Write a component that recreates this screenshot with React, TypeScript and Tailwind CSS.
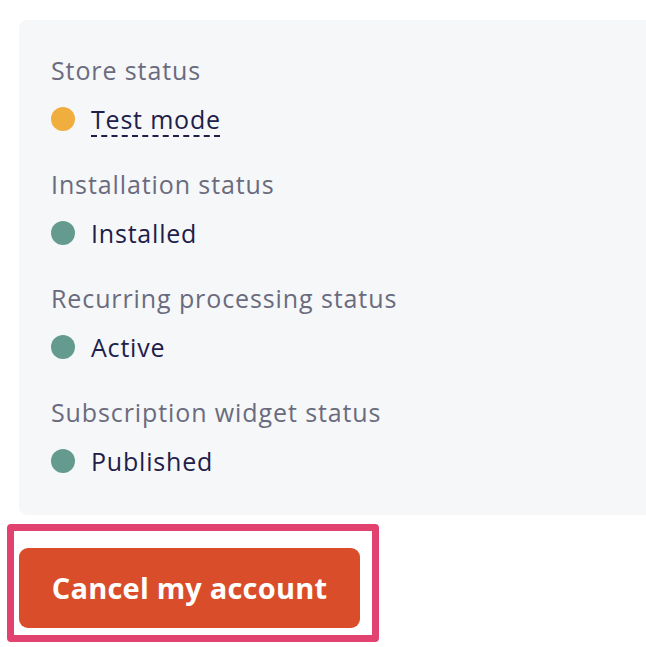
const statuses = [
  { label: "Store status", value: "Test mode", dot: "bg-[#f0ae3e]", dashed: true },
  { label: "Installation status", value: "Installed", dot: "bg-[#659b8f]" },
  { label: "Recurring processing status", value: "Active", dot: "bg-[#659b8f]" },
  { label: "Subscription widget status", value: "Published", dot: "bg-[#659b8f]" },
];

export default function App() {
  return (
    <div className="min-h-screen w-[646px] overflow-hidden bg-white pt-[20px] font-['Open_Sans',sans-serif]">
      {/* Status panel */}
      <div className="ml-[19px] w-[640px] rounded-[8px] bg-[#f6f7f9] pl-[32px] pt-[34px] pb-[38px]">
        <div className="flex flex-col gap-[33px]">
          {statuses.map((s) => (
            <div key={s.label}>
              <div className="h-[32px] text-[25px] leading-[32px] tracking-[0.9px] text-[#6a6b7d]">
                {s.label}
              </div>
              <div className="mt-[17px] flex h-[32px] items-center gap-[16px]">
                <span className={`h-[24px] w-[24px] rounded-full ${s.dot}`} />
                <span
                  className={`text-[25px] leading-[32px] tracking-[0.8px] text-[#1e2049] ${
                    s.dashed
                      ? "underline decoration-dashed decoration-[1.5px] underline-offset-[6px]"
                      : ""
                  }`}
                >
                  {s.value}
                </span>
              </div>
            </div>
          ))}
        </div>
      </div>

      {/* Highlighted action */}
      <div className="ml-[7px] mt-[9px] w-[372px] rounded-[4px] border-[7px] border-[#e2426f] pt-[17px] pb-[7px] pl-[5px] pr-[12px]">
        <button className="flex h-[80px] w-[341px] items-center justify-center rounded-[9px] bg-[#d94d2b] text-[29px] font-bold tracking-[0.2px] text-white">
          Cancel my account
        </button>
      </div>
    </div>
  );
}
